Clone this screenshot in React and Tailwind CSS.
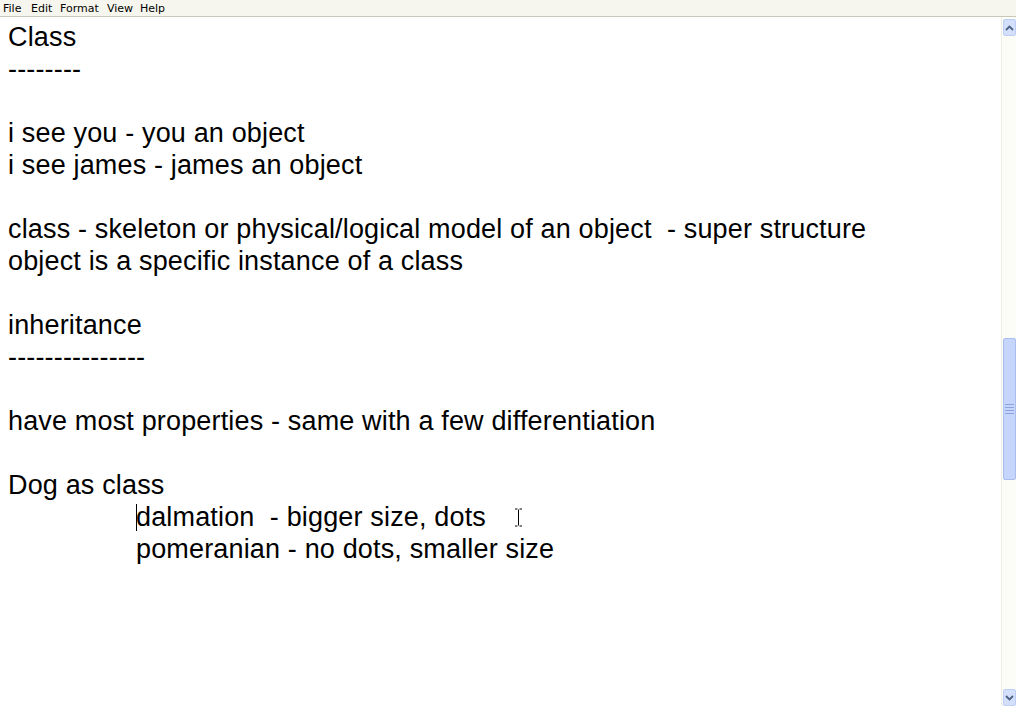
const lines = [
  { text: "Class" },
  { text: "--------" },
  { text: "" },
  { text: "i see you - you an object" },
  { text: "i see james - james an object" },
  { text: "" },
  { text: "class - skeleton or physical/logical model of an object  - super structure" },
  { text: "object is a specific instance of a class" },
  { text: "" },
  { text: "inheritance" },
  { text: "---------------" },
  { text: "" },
  { text: "have most properties - same with a few differentiation" },
  { text: "" },
  { text: "Dog as class" },
  { text: "dalmation  - bigger size, dots", indent: true, caret: true },
  { text: "pomeranian - no dots, smaller size", indent: true },
];

function Chevron({ down }) {
  return (
    <svg width="9" height="6" viewBox="0 0 9 6" className={down ? "rotate-180" : ""}>
      <path d="M1 5 L4.5 1.5 L8 5" fill="none" stroke="#4d6185" strokeWidth="1.8" />
    </svg>
  );
}

export default function App() {
  return (
    <div className="w-[1016px] h-[706px] overflow-hidden flex flex-col bg-white">
      {/* menu bar */}
      <div className="h-[17px] flex items-center pl-[3px] bg-[#f7f6ee] border-b border-[#c9c7ba] text-[11px] leading-[15px] text-black font-['DejaVu_Sans',sans-serif] shrink-0">
        <span className="w-[28px]">File</span>
        <span className="w-[29px]">Edit</span>
        <span className="w-[47px]">Format</span>
        <span className="w-[33px]">View</span>
        <span>Help</span>
      </div>

      <div className="flex flex-1 min-h-0">
        {/* text area */}
        <div className="relative flex-1 pt-[4px] pl-[8px] text-[27px] leading-[32px] tracking-[0.16px] text-black font-['Liberation_Sans',Arial,sans-serif] whitespace-pre">
          {lines.map((l, i) => (
            <div key={i} className={`h-[32px] flex items-center ${l.indent ? "pl-[128px]" : ""}`}>
              {l.caret && <span className="w-[1px] h-[27px] bg-black -mr-[1px]" />}
              <span>{l.text}</span>
            </div>
          ))}
          {/* I-beam mouse cursor */}
          <svg className="absolute left-[514px] top-[491px]" width="9" height="19" viewBox="0 0 9 19">
            <path d="M1 1 H3.5 M5.5 1 H8 M4.5 1.5 V17.5 M1 18 H3.5 M5.5 18 H8" stroke="#000" strokeWidth="1" fill="none" />
          </svg>
        </div>

        {/* scrollbar */}
        <div className="w-[15px] flex flex-col bg-[#fdfdf8] border-l border-[#efeee6] shrink-0">
          <div className="h-[17px] mt-[2px] ml-[1px] rounded-[2px] bg-[#d4e0fb] border border-[#bccdf6] flex items-center justify-center">
            <Chevron />
          </div>
          <div className="flex-1 flex flex-col">
            <div className="h-[302px]" />
            <div className="h-[142px] ml-[1px] rounded-[2px] bg-[#c5d5fc] border border-[#a9bdf0] flex flex-col items-center justify-center gap-[2px]">
              {[0, 1, 2, 3].map((k) => (
                <div key={k} className="w-[9px] h-[1px] bg-[#8ba3e0]" />
              ))}
            </div>
            <div className="flex-1" />
          </div>
          <div className="h-[17px] ml-[1px] rounded-[2px] bg-[#d4e0fb] border border-[#bccdf6] flex items-center justify-center">
            <Chevron down />
          </div>
        </div>
      </div>
    </div>
  );
}
